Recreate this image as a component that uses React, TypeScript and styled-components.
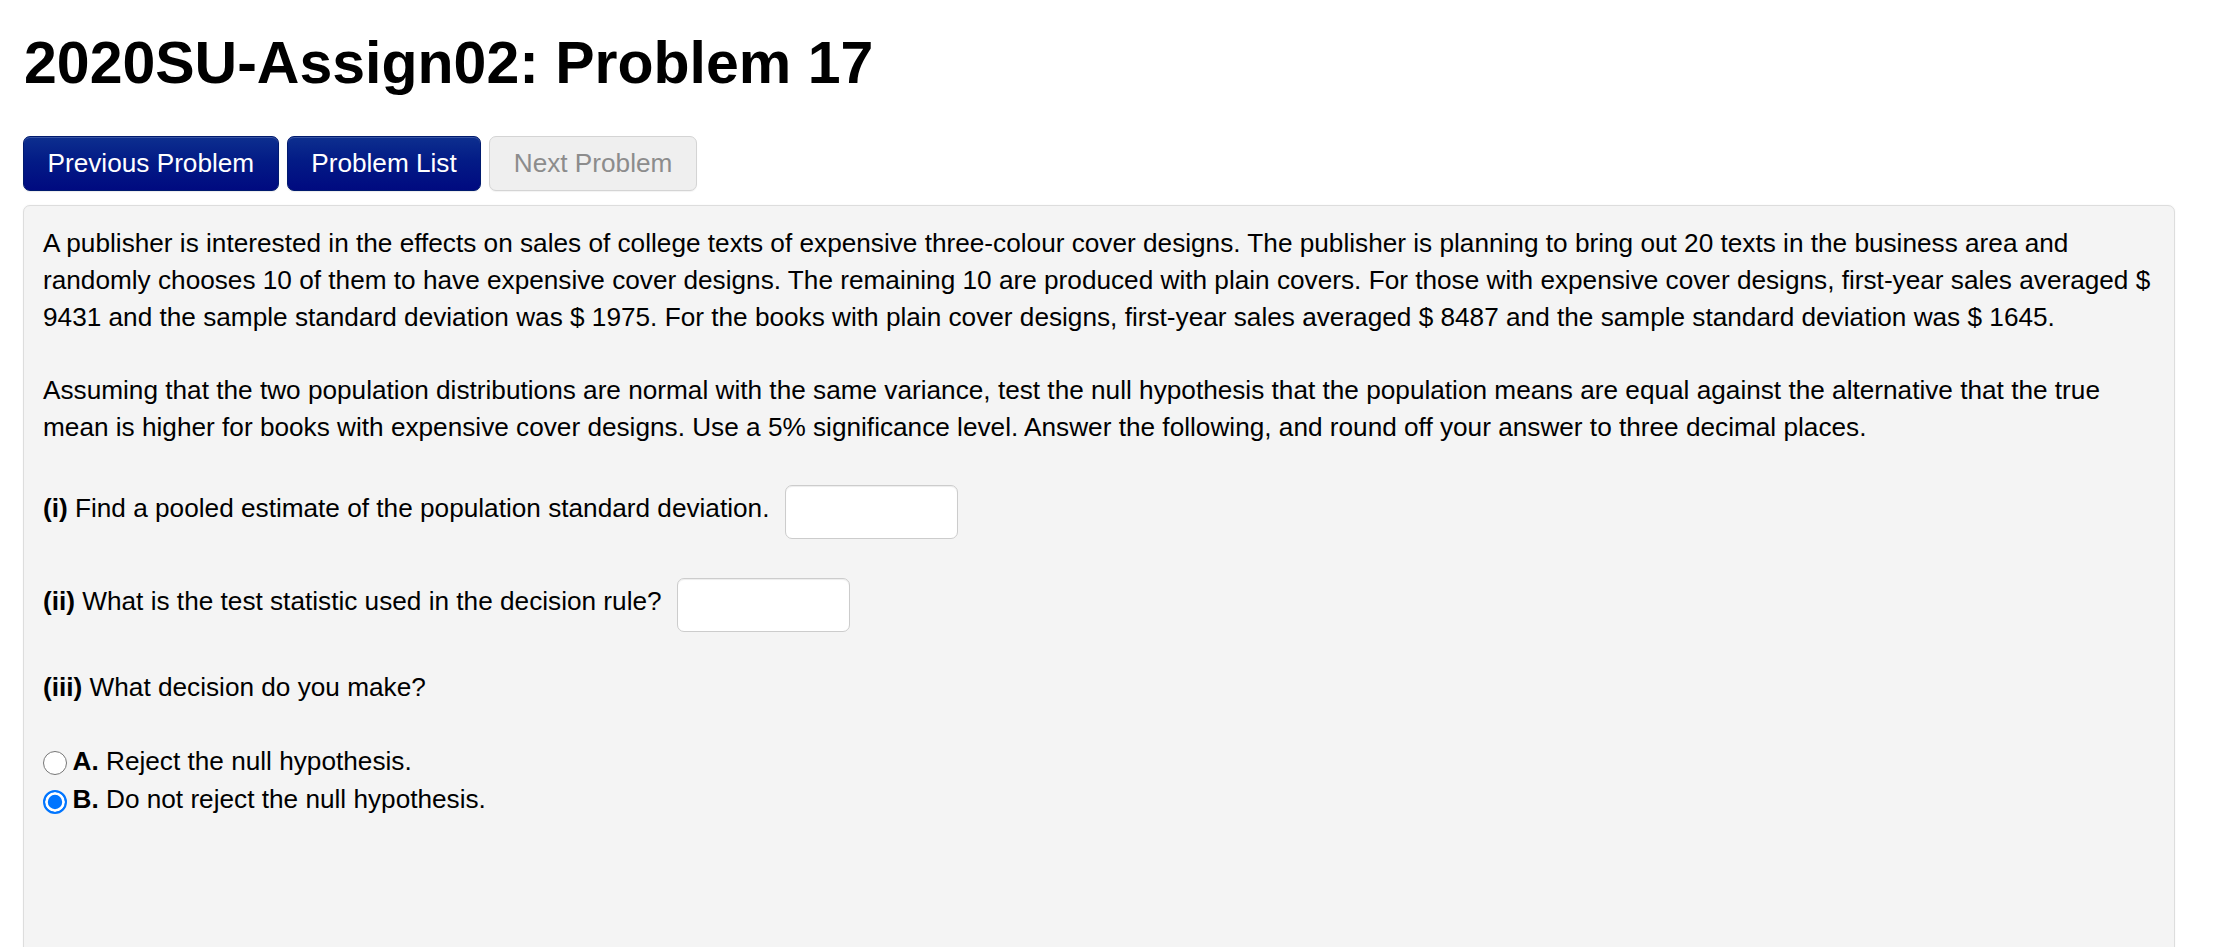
import React from "react";
import styled, { createGlobalStyle } from "styled-components";

const GlobalStyle = createGlobalStyle`
  html, body {
    margin: 0;
    padding: 0;
    background: #ffffff;
    overflow: hidden;
  }
  body {
    font-family: "Liberation Sans", Arial, Helvetica, sans-serif;
    color: #000000;
  }
`;

const Page = styled.div`
  padding: 28px 52px 0 23px;
`;

const Title = styled.h1`
  margin: 0 0 38px 1px;
  font-size: 59px;
  line-height: 70.3px;
  font-weight: 700;
  color: #000;
`;

const Toolbar = styled.div`
  display: flex;
  gap: 8px;
  margin-bottom: 14px;
`;

const NavButton = styled.button<{ $disabled?: boolean }>`
  box-sizing: border-box;
  height: 55px;
  padding: 0 23.5px;
  font-family: inherit;
  font-size: 26.2px;
  line-height: 36.7px;
  border-radius: 7px;
  cursor: ${(p) => (p.$disabled ? "default" : "pointer")};
  color: ${(p) => (p.$disabled ? "#8c8c8c" : "#ffffff")};
  border: 1px solid ${(p) => (p.$disabled ? "#d4d4d4" : "#001a6e")};
  background: ${(p) =>
    p.$disabled
      ? "#efefef"
      : "linear-gradient(to bottom, #0d2f8f 0%, #031b86 45%, #000a80 100%)"};
  box-shadow: ${(p) =>
    p.$disabled
      ? "0 1px 1px rgba(0,0,0,0.05)"
      : "inset 0 1px 0 rgba(255,255,255,0.18), 0 1px 1px rgba(0,0,0,0.08)"};
`;

const Panel = styled.div`
  background: #f4f4f4;
  border: 1px solid #dddddd;
  border-radius: 7px;
  box-shadow: 0 0 2px rgba(0, 0, 0, 0.06);
  padding: 19px 12px 19px 19px;
  min-height: 760px;
`;

const Para = styled.p`
  margin: 0 0 36.7px;
  font-size: 26.2px;
  line-height: 36.7px;
`;

const AnswerInput = styled.input`
  box-sizing: border-box;
  display: inline-block;
  vertical-align: middle;
  width: 173px;
  height: 54px;
  margin: 2.5px 0 0 8px;
  padding: 6px 10px;
  font-family: inherit;
  font-size: 26.2px;
  background: #ffffff;
  border: 1px solid #cccccc;
  border-radius: 7px;
  box-shadow: inset 0 1px 1px rgba(0, 0, 0, 0.075);
  outline: none;
`;

const OptionRow = styled.label`
  display: flex;
  align-items: center;
  height: 38.5px;
  font-size: 26.2px;
  line-height: 36.7px;
`;

const Radio = styled.input`
  appearance: none;
  -webkit-appearance: none;
  box-sizing: border-box;
  flex: none;
  width: 24px;
  height: 24px;
  margin: 4px 5.5px 0 0;
  border-radius: 50%;
  border: 1.5px solid #767676;
  background: #ffffff;
  &:checked {
    border: 2px solid #0075ff;
    background: #0075ff;
    box-shadow: inset 0 0 0 2.8px #ffffff;
  }
`;

const Options = styled.div`
  margin: 0;
`;

export default function App() {
  return (
    <>
      <GlobalStyle />
      <Page>
        <Title>2020SU-Assign02: Problem 17</Title>
        <Toolbar>
          <NavButton>Previous Problem</NavButton>
          <NavButton>Problem List</NavButton>
          <NavButton $disabled disabled>
            Next Problem
          </NavButton>
        </Toolbar>
        <Panel>
          <Para>
            A publisher is interested in the effects on sales of college texts of
            expensive three-colour cover designs. The publisher is planning to bring
            out 20 texts in the business area and randomly chooses 10 of them to have
            expensive cover designs. The remaining 10 are produced with plain covers.
            For those with expensive cover designs, first-year sales averaged $ 9431
            and the sample standard deviation was $ 1975. For the books with plain
            cover designs, first-year sales averaged $ 8487 and the sample standard
            deviation was $ 1645.
          </Para>
          <Para>
            Assuming that the two population distributions are normal with the same
            variance, test the null hypothesis that the population means are equal
            against the alternative that the true mean is higher for books with
            expensive cover designs. Use a 5% significance level. Answer the
            following, and round off your answer to three decimal places.
          </Para>
          <Para>
            <b>(i)</b> Find a pooled estimate of the population standard deviation.{" "}
            <AnswerInput type="text" aria-label="pooled estimate" />
          </Para>
          <Para>
            <b>(ii)</b> What is the test statistic used in the decision rule?{" "}
            <AnswerInput type="text" aria-label="test statistic" />
          </Para>
          <Para>
            <b>(iii)</b> What decision do you make?
          </Para>
          <Options>
            <OptionRow>
              <Radio type="radio" name="decision" value="A" />
              <span>
                <b>A.</b> Reject the null hypothesis.
              </span>
            </OptionRow>
            <OptionRow>
              <Radio type="radio" name="decision" value="B" defaultChecked />
              <span>
                <b>B.</b> Do not reject the null hypothesis.
              </span>
            </OptionRow>
          </Options>
        </Panel>
      </Page>
    </>
  );
}
